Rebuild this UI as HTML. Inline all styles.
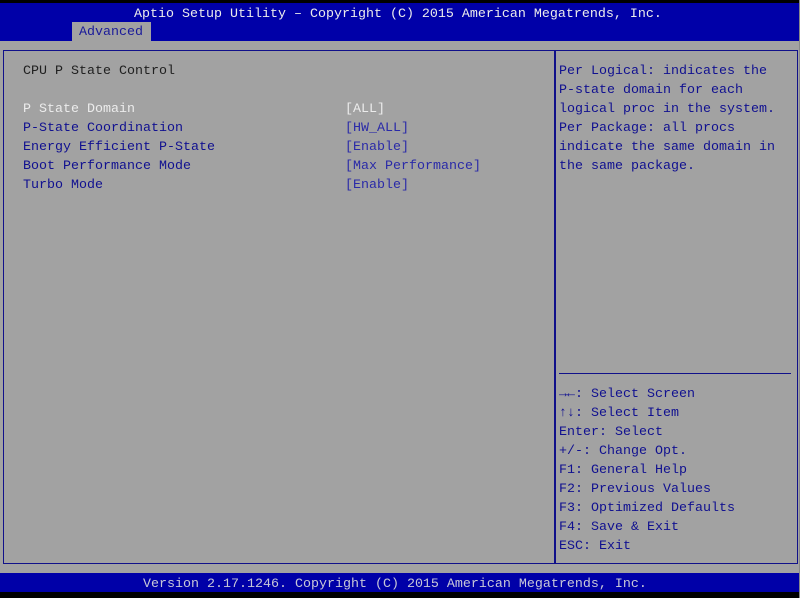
<!DOCTYPE html>
<html><head><meta charset="utf-8"><style>
html,body{margin:0;padding:0;width:806px;height:606px;background:#fff;overflow:hidden}
*{box-sizing:border-box}
.m{font-family:"Liberation Mono","DejaVu Sans Mono",monospace;font-size:13.33px;line-height:19px;white-space:pre;position:absolute}
#top{position:absolute;left:0;top:0;width:800px;height:3px;background:#000}
#hdr{position:absolute;left:0;top:3px;width:800px;height:38px;background:#0000a8}
#tab{position:absolute;left:72px;top:22px;width:79px;height:19px;background:#a2a2a2}
#body{position:absolute;left:0;top:41px;width:800px;height:532px;background:#a2a2a2}
#frame{position:absolute;left:3px;top:50px;width:795px;height:514px;border:1px solid #10108a}
#div{position:absolute;left:554px;top:50px;width:2px;height:514px;background:#10108a}
#hr{position:absolute;left:559px;top:373px;width:232px;height:1px;background:#10108a}
#ftr{position:absolute;left:0;top:573px;width:800px;height:19px;background:#0000a8}
#blk{position:absolute;left:0;top:592px;width:800px;height:6px;background:#000}
#rs{position:absolute;left:799px;top:0;width:1px;height:598px;background:#888}
.w{color:#ececec}.b{color:#101090}.v{color:#2a2aa8}.d{color:#202020}
</style></head><body>
<div id="top"></div><div id="hdr"></div><div id="tab"></div>
<div id="body"></div><div id="frame"></div><div id="div"></div><div id="hr"></div>
<div id="ftr"></div><div id="blk"></div><div id="rs"></div>
<div class="m w" style="left:134px;top:5px">Aptio Setup Utility – Copyright (C) 2015 American Megatrends, Inc.</div>
<div class="m" style="left:79px;top:23px;color:#1a1a9a">Advanced</div>
<div class="m d" style="left:23px;top:62px">CPU P State Control</div>
<div class="m b" style="left:23px;top:100px"><span class="w">P State Domain</span>
P-State Coordination
Energy Efficient P-State
Boot Performance Mode
Turbo Mode</div>
<div class="m v" style="left:345px;top:100px"><span class="w">[ALL]</span>
[HW_ALL]
[Enable]
[Max Performance]
[Enable]</div>
<div class="m b" style="left:559px;top:62px">Per Logical: indicates the
P-state domain for each
logical proc in the system.
Per Package: all procs
indicate the same domain in
the same package.</div>
<div class="m b" style="left:559px;top:385px">→←: Select Screen
↑↓: Select Item
Enter: Select
+/-: Change Opt.
F1: General Help
F2: Previous Values
F3: Optimized Defaults
F4: Save &amp; Exit
ESC: Exit</div>
<div class="m" style="left:143px;top:575px;color:#c8c8d8">Version 2.17.1246. Copyright (C) 2015 American Megatrends, Inc.</div>
</body></html>
